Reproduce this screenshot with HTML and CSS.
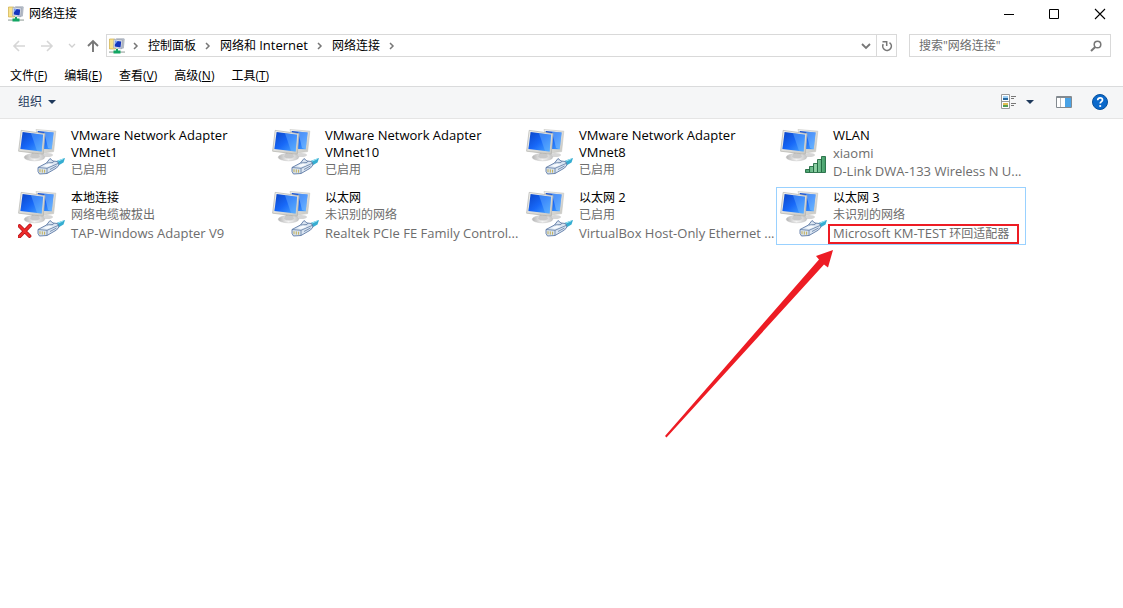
FILE: index.html
```html
<!DOCTYPE html>
<html lang="zh-CN">
<head>
<meta charset="utf-8">
<meta name="viewport" content="width=device-width, initial-scale=1">
<title>网络连接</title>
<link rel="stylesheet" href="styles.css">
</head>
<body>
<svg class="defs" width="0" height="0" aria-hidden="true">
  <defs>
    <linearGradient id="screen" x1="0" y1="0" x2="1" y2="1">
      <stop offset="0" stop-color="#0b45c8"/><stop offset="0.5" stop-color="#1768f8"/><stop offset="1" stop-color="#4aa8ff"/>
    </linearGradient>
    <linearGradient id="frame" x1="0" y1="0" x2="1" y2="1">
      <stop offset="0" stop-color="#f6f6f3"/><stop offset="1" stop-color="#c6c6c2"/>
    </linearGradient>
    <linearGradient id="stand" x1="0" y1="0" x2="1" y2="0">
      <stop offset="0" stop-color="#b4b4b4"/><stop offset="0.5" stop-color="#f4f4f4"/><stop offset="1" stop-color="#c4c4c4"/>
    </linearGradient>
    <linearGradient id="signal" x1="0" y1="0" x2="1" y2="0">
      <stop offset="0" stop-color="#3f9d66"/><stop offset="0.5" stop-color="#8fd0a5"/><stop offset="1" stop-color="#3f9d66"/>
    </linearGradient>
    <symbol id="monitors" viewBox="0 0 48 48">
      <ellipse cx="29" cy="27" rx="6" ry="2" fill="#d6d6d6"/>
      <path d="M18 1.5 37.8 3.2 35.6 23.6 24 25Z" fill="url(#frame)" stroke="#c2c2be" stroke-width=".6"/>
      <path d="M19.5 3 35.6 4.6 33.7 21.3 26 21Z" fill="url(#screen)"/>
      <path d="M26 3.6 35.6 4.6 33.7 21.3 30 20Z" fill="#8bc8ff" opacity=".5"/>
      <path d="M14 24h6l1 4h-8z" fill="#a8a8a8"/>
      <ellipse cx="16.5" cy="29.2" rx="10.3" ry="3.6" fill="url(#stand)" stroke="#c0c0c0" stroke-width=".5"/>
      <path d="M13 26h8l1 3q-5 3-10 0z" fill="#c9c9c9"/>
      <path d="M3.2 2.4 27 5.6 25.3 26.2 .6 23.2Z" fill="url(#frame)" stroke="#b2b2ae" stroke-width=".7"/>
      <path d="M4.6 4.1 25.1 6.8 23.6 23.6 2.4 20.9Z" fill="url(#screen)"/>
      <path d="M13 5.2 25.1 6.8 23.6 23.6 19 23Z" fill="#78bdff" opacity=".4"/>
    </symbol>
    <symbol id="plug" viewBox="0 0 48 48">
      <path d="m37 35 2.5-2.5 7.5-2.5-1.5 4.5-6 3.5z" fill="#35add1"/>
      <path d="m39 33.5 6-2.5" stroke="#9ce4f4" stroke-width="1"/>
      <path d="m20 39.5 8.5-4.5 3.5-4.5 3 2.5 4.5.5 1.5 3.5-2.5 3-9.5 5.5-7.5.5-1.5-2.5z" fill="#d9e4f1" stroke="#5d79a5" stroke-width=".9" stroke-linejoin="round"/>
      <path d="m20 39.5 9 .8 11.5-5M29 40.3v5M28.5 35l6.5-.5 1-1.5M32 41.5l6.5-3.5" fill="none" stroke="#5f7ba2" stroke-width=".8"/>
      <path d="m25 38 6-2.5 4 1.2-6 2.3z" fill="#f7fafd"/>
      <path d="M22 41.2v3M24.3 41.4v3.2M26.6 41.7v3" stroke="#c2ae55" stroke-width="1"/>
    </symbol>
    <symbol id="lan" viewBox="0 0 48 48"><use href="#monitors" width="48" height="48"/><use href="#plug" width="48" height="48"/></symbol>
    <symbol id="unplugged" viewBox="0 0 48 48">
      <use href="#lan" width="48" height="48"/>
      <path d="M1.5 36 11.5 46M12 35.5 1.5 46.5" stroke="#b01218" stroke-width="3.8" stroke-linecap="round"/>
      <path d="M1.5 36 11.5 46M12 35.5 1.5 46.5" stroke="#ee2b2b" stroke-width="2.4" stroke-linecap="round"/>
    </symbol>
    <symbol id="wlan" viewBox="0 0 48 48">
      <use href="#monitors" width="48" height="48"/>
      <path d="M25.5 41.5h4v3h-4zM29.5 38.5h4v6h-4zM33.5 35.5h4v9h-4zM37.5 31.5h4v13h-4zM41.5 28.5h4v16h-4z" fill="url(#signal)" stroke="#236b43" stroke-width=".9"/>
    </symbol>
    <symbol id="netfolder" viewBox="0 0 16 16">
      <path d="M.5 1h5l1 1v9h-6z" fill="#f8e28c" stroke="#cfae49" stroke-width=".7"/>
      <path d="M7 .3h8l.7 1-.8 9-3.4 1z" fill="#b3bac5"/>
      <path d="m5 1.2 8.4.8-.9 8.8-8-1z" fill="#dfe3ea" stroke="#939bab" stroke-width=".6"/>
      <path d="m6.2 2.8 6 .6-.7 6-5.8-.8z" fill="#1535bd"/>
      <path d="m6.2 2.8 2.6.2-2.9 3.5z" fill="#7fa9f5"/>
      <path d="M0 13.2h16v1.8H0z" fill="#bfc6c3"/>
      <path d="M7 11h2v1.5h2.5v3h-7v-3H7z" fill="#12a663"/>
    </symbol>
    <symbol id="chev" viewBox="0 0 6 8"><path d="m1 1 3 3-3 3" fill="none" stroke="#777" stroke-width="1.5"/></symbol>
  </defs>
</svg>

<div class="window">
  <header class="titlebar">
    <svg class="app-icon"><use href="#netfolder"/></svg>
    <h1 class="title">网络连接</h1>
    <div class="window-buttons">
      <button class="window-button" aria-label="最小化"><svg width="12" height="12"><path d="M1 6.5h10" stroke="#000"/></svg></button>
      <button class="window-button" aria-label="最大化"><svg width="12" height="12"><path d="M1.5 1.5h9v9h-9z" fill="none" stroke="#000"/></svg></button>
      <button class="window-button" aria-label="关闭"><svg width="12" height="12"><path d="m1 1 10 10M11 1 1 11" stroke="#000" stroke-width="1.1"/></svg></button>
    </div>
  </header>

  <div class="navigation">
    <div class="history">
      <button class="nav-button" aria-label="后退" disabled><svg width="14" height="14"><path d="M13 7H2M7 2 2 7l5 5" fill="none" stroke="#d6d6d6" stroke-width="1.6"/></svg></button>
      <button class="nav-button" aria-label="前进" disabled><svg width="14" height="14"><path d="M1 7h11M7 2l5 5-5 5" fill="none" stroke="#d6d6d6" stroke-width="1.6"/></svg></button>
      <button class="nav-button recent" aria-label="最近浏览的位置" disabled><svg width="8" height="6"><path d="m1 1 3 3 3-3" fill="none" stroke="#d0d0d0" stroke-width="1.3"/></svg></button>
      <button class="nav-button up" aria-label="向上"><svg width="14" height="14"><path d="M7 13V2M2 7l5-5 5 5" fill="none" stroke="#777" stroke-width="1.9"/></svg></button>
    </div>
    <nav class="address" aria-label="地址">
      <svg class="address-icon"><use href="#netfolder"/></svg>
      <svg class="chev"><use href="#chev"/></svg>
      <a class="crumb" href="#">控制面板</a>
      <svg class="chev"><use href="#chev"/></svg>
      <a class="crumb" href="#">网络和 <span class="latin">Internet</span></a>
      <svg class="chev"><use href="#chev"/></svg>
      <a class="crumb" href="#">网络连接</a>
      <svg class="chev"><use href="#chev"/></svg>
      <button class="address-drop" aria-label="以前的位置"><svg width="10" height="8"><path d="m1 2 4 4 4-4" fill="none" stroke="#777" stroke-width="1.8"/></svg></button>
      <button class="refresh" aria-label="刷新"><svg width="12" height="12"><path d="M8.5 2.6a4.3 4.3 0 1 1-6.3 1.6" fill="none" stroke="#777" stroke-width="1.6"/><path d="M1.5 1.8H5.7V6" fill="none" stroke="#777" stroke-width="1.5"/></svg></button>
    </nav>
    <form class="search">
      <input class="search-input" type="search" aria-label="搜索" placeholder='搜索"网络连接"'>
      <button class="search-button" type="button" aria-label="搜索"><svg width="12" height="12"><circle cx="7.5" cy="4.5" r="3.3" fill="none" stroke="#777" stroke-width="1.5"/><path d="M5.2 7 1 11" stroke="#777" stroke-width="2"/></svg></button>
    </form>
  </div>

  <div class="menubar" role="menubar">
    <button class="menu" role="menuitem">文件(<u>F</u>)</button>
    <button class="menu" role="menuitem">编辑(<u>E</u>)</button>
    <button class="menu" role="menuitem">查看(<u>V</u>)</button>
    <button class="menu" role="menuitem">高级(<u>N</u>)</button>
    <button class="menu" role="menuitem">工具(<u>T</u>)</button>
  </div>

  <div class="toolbar">
    <button class="organize">组织 <svg width="8" height="4"><path d="M0 0h8L4 4z" fill="#1e395b"/></svg></button>
    <div class="tools">
      <button class="tool" aria-label="更改视图"><svg width="16" height="16"><path d="M1.5.5h8v14h-8zM1.5 7.5h8" fill="#fff" stroke="#9a9a9a"/><path d="M3 2h5v2H3z" fill="#9fd0f5"/><path d="M3 4h5v2H3z" fill="#28699f"/><path d="M3 9h5v2H3z" fill="#e2bd52"/><path d="M3 11h5v2H3z" fill="#549b54"/><path d="M11 2.5h5M11 4.5h3M11 9.5h5M11 11.5h3" stroke="#777"/></svg></button>
      <button class="tool view-drop" aria-label="更多视图选项"><svg width="8" height="4"><path d="M0 0h8L4 4z" fill="#1e395b"/></svg></button>
      <button class="tool" aria-label="显示预览窗格"><svg width="16" height="12"><path d="M.5.5h15v11H.5z" fill="#fff" stroke="#838a90"/><path d="M1 1.5h14" stroke="#838a90"/><path d="M4.5 2v9" stroke="#b5bbc0"/><path d="M9 2h6v9H9z" fill="#4aa3e6"/></svg></button>
      <button class="tool" aria-label="帮助"><svg width="16" height="16"><circle cx="8" cy="8" r="7.5" fill="#0b69cb" stroke="#07509c"/><path d="M5.7 6.2c0-3.2 4.8-3 4.8-.2 0 1.6-2.3 1.8-2.3 3.6" fill="none" stroke="#fff" stroke-width="1.7"/><circle cx="8.2" cy="12" r="1.1" fill="#fff"/></svg></button>
    </div>
  </div>

  <main class="connections">
    <article class="connection">
      <svg class="connection-icon"><use href="#lan"/></svg>
      <div class="details"><h2 class="name latin">VMware Network Adapter VMnet1</h2><p class="line">已启用</p></div>
    </article>
    <article class="connection">
      <svg class="connection-icon"><use href="#lan"/></svg>
      <div class="details"><h2 class="name latin">VMware Network Adapter VMnet10</h2><p class="line">已启用</p></div>
    </article>
    <article class="connection">
      <svg class="connection-icon"><use href="#lan"/></svg>
      <div class="details"><h2 class="name latin">VMware Network Adapter VMnet8</h2><p class="line">已启用</p></div>
    </article>
    <article class="connection">
      <svg class="connection-icon"><use href="#wlan"/></svg>
      <div class="details"><h2 class="name latin">WLAN</h2><p class="line latin">xiaomi</p><p class="line latin">D-Link DWA-133 Wireless N U...</p></div>
    </article>
    <article class="connection">
      <svg class="connection-icon"><use href="#unplugged"/></svg>
      <div class="details"><h2 class="name">本地连接</h2><p class="line">网络电缆被拔出</p><p class="line latin">TAP-Windows Adapter V9</p></div>
    </article>
    <article class="connection">
      <svg class="connection-icon"><use href="#lan"/></svg>
      <div class="details"><h2 class="name">以太网</h2><p class="line">未识别的网络</p><p class="line latin">Realtek PCIe FE Family Control...</p></div>
    </article>
    <article class="connection">
      <svg class="connection-icon"><use href="#lan"/></svg>
      <div class="details"><h2 class="name">以太网 <span class="latin">2</span></h2><p class="line">已启用</p><p class="line latin">VirtualBox Host-Only Ethernet ...</p></div>
    </article>
    <article class="connection selected">
      <svg class="connection-icon"><use href="#lan"/></svg>
      <div class="details"><h2 class="name">以太网 <span class="latin">3</span></h2><p class="line">未识别的网络</p><p class="line"><span class="latin">Microsoft KM-TEST</span> 环回适配器</p></div>
      <div class="highlight"></div>
      <svg class="arrow" width="170" height="190" viewBox="0 0 170 190" aria-hidden="true"><path d="M0 187 154 10.5 151 7 168 1 163 18.500 159 15.500 1.500 188.500Z" fill="#ed1c24"/></svg>
    </article>
  </main>
</div>
</body>
</html>
```

FILE: styles.css
```css
* { box-sizing: border-box; }

body {
  margin: 0;
  background: #fff;
  color: #000;
  font: 12px/18px "Open Sans", "Noto Sans CJK SC", sans-serif;
}

h1, h2, p { margin: 0; font-size: 12px; font-weight: 400; }

button {
  display: flex;
  align-items: center;
  justify-content: center;
  padding: 0;
  border: 0;
  background: none;
  color: inherit;
  font: inherit;
}

svg { display: block; flex: none; }
.defs { position: absolute; }
.latin { font-size: 13px; }

.window { display: flex; flex-direction: column; min-height: 100vh; }

.titlebar { display: flex; align-items: center; height: 27px; padding-left: 8px; }
.app-icon, .address-icon { width: 16px; height: 16px; }
.title { margin-left: 5px; }
.window-buttons { display: flex; margin-left: auto; }
.window-button { width: 46px; height: 27px; }
.window-button:first-child { width: 44px; }

.navigation { display: flex; height: 30px; padding: 7px 12px 0 12px; }
.history { display: flex; align-items: center; gap: 14px; width: 94px; }
.nav-button.up { margin-left: -4px; }

.address {
  display: flex;
  flex: 1;
  align-items: center;
  border: 1px solid #d9d9d9;
  padding-left: 2px;
}
.chev { width: 6px; height: 8px; margin: 0 9px; }
.address-icon + .chev { margin-left: 8px; }
.crumb { color: inherit; text-decoration: none; white-space: nowrap; }
.address-drop { width: 20px; height: 100%; margin-left: auto; }
.refresh { width: 20px; height: 100%; border-left: 1px solid #d9d9d9; }

.search {
  display: flex;
  width: 202px;
  margin-left: 12px;
  border: 1px solid #d9d9d9;
}
.search-input {
  flex: 1;
  min-width: 0;
  padding: 0 0 0 9px;
  border: 0;
  background: none;
  font: inherit;
}
.search-input::placeholder { color: #6d6d6d; opacity: 1; }
.search-button { width: 28px; }

.menubar { display: flex; align-items: center; gap: 17px; height: 29px; padding: 9px 10px 0; }
.menu { white-space: nowrap; }

.toolbar {
  display: flex;
  align-items: center;
  justify-content: space-between;
  height: 33px;
  padding: 0 15px 2px 18px;
  border-top: 1px solid #dadbdc;
  border-bottom: 1px solid #e5e5e5;
  background: #f5f6f7;
  color: #1e395b;
}
.organize { gap: 6px; }
.tools { display: flex; align-items: center; gap: 20px; }
.view-drop { margin: 0 2px 0 -10px; }

.connections {
  display: grid;
  grid-template-columns: repeat(auto-fill, 250px);
  gap: 4px;
  padding: 6px 14px;
}
.connection {
  position: relative;
  display: flex;
  min-height: 58px;
  padding: 1px 4px 1px 3px;
  border: 1px solid transparent;
}
.connection.selected { border-color: #99d1ff; }
.connection-icon { width: 48px; height: 48px; margin-top: 1px; }
.details { flex: 1; min-width: 0; margin-left: 5px; }
.name { line-height: 17px; }
.name.latin { max-width: 170px; }
.line { color: #6d6d6d; line-height: 18px; white-space: nowrap; }

.highlight {
  position: absolute;
  top: 36px;
  left: 51px;
  width: 191px;
  height: 20px;
  border: 2px solid #ed1c24;
}
.arrow { position: absolute; top: 61px; left: -112px; pointer-events: none; }
```
